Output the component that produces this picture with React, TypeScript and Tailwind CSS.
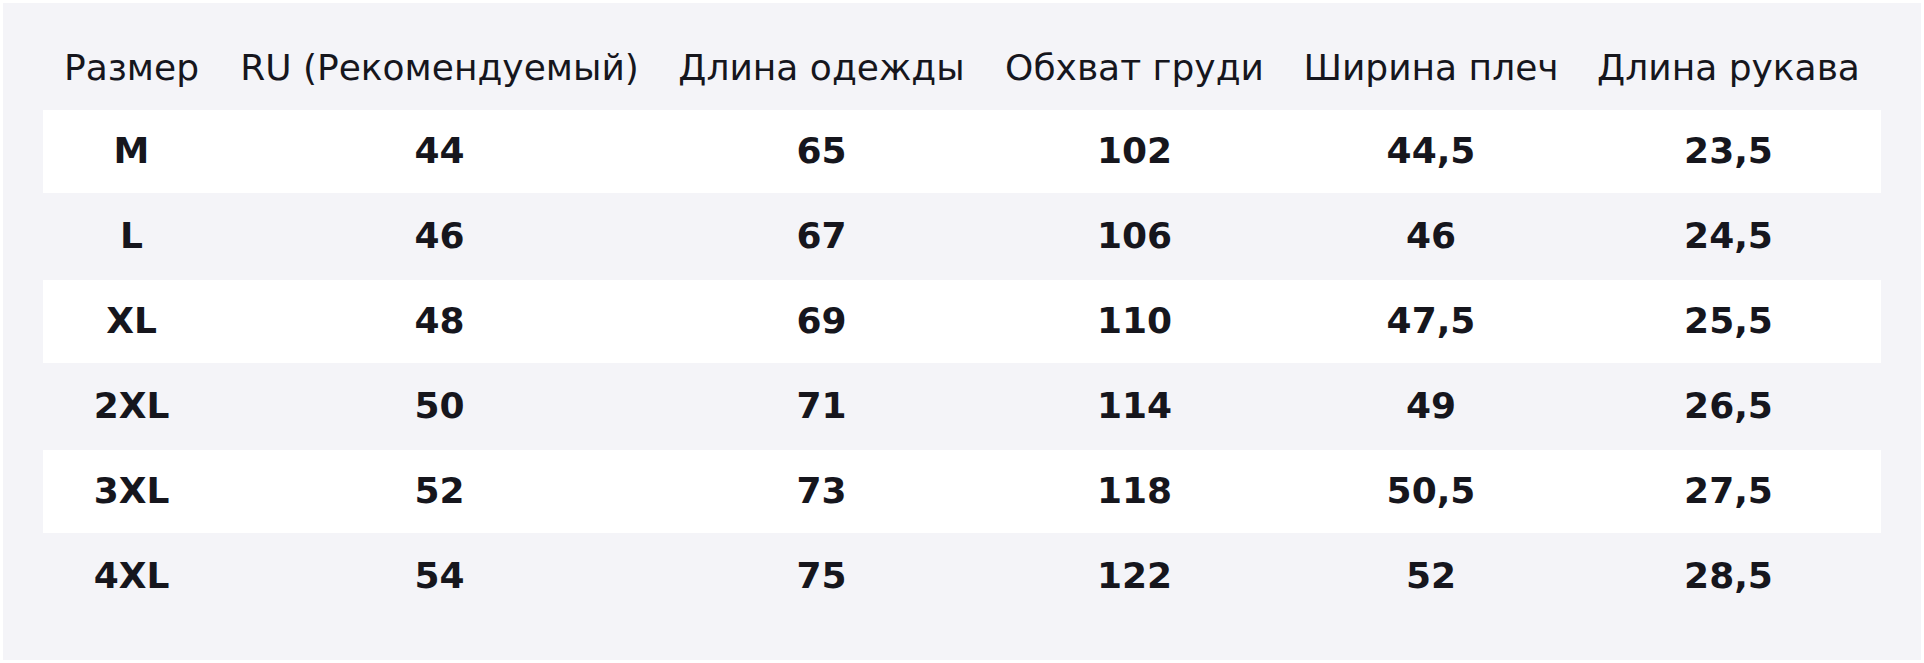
const headers = [
  "Размер",
  "RU (Рекомендуемый)",
  "Длина одежды",
  "Обхват груди",
  "Ширина плеч",
  "Длина рукава",
]

const rows = [
  ["M", "44", "65", "102", "44,5", "23,5"],
  ["L", "46", "67", "106", "46", "24,5"],
  ["XL", "48", "69", "110", "47,5", "25,5"],
  ["2XL", "50", "71", "114", "49", "26,5"],
  ["3XL", "52", "73", "118", "50,5", "27,5"],
  ["4XL", "54", "75", "122", "52", "28,5"],
]

const cols = "grid grid-cols-[177px_439px_325px_301px_292px_303px]"

export default function App() {
  return (
    <div className="min-h-screen bg-white p-[3px]" style={{ fontFamily: '"DejaVu Sans", sans-serif' }}>
      <div className="h-[657px] w-[1918px] bg-[#f4f4f8] px-10 pb-10 pt-[22px] text-[#16161d]">
        <div className={`${cols} h-[85px] items-center text-[36px]`}>
          {headers.map((h) => (
            <div key={h} className="text-center whitespace-nowrap">
              {h}
            </div>
          ))}
        </div>
        {rows.map((row, i) => (
          <div
            key={row[0]}
            className={`${cols} h-[85px] items-center border-b-2 border-[#f4f4f8] pb-px text-[36px] font-bold ${
              i % 2 === 0 ? "bg-white" : "bg-transparent"
            }`}
          >
            {row.map((cell, j) => (
              <div key={j} className="text-center">
                {cell}
              </div>
            ))}
          </div>
        ))}
      </div>
    </div>
  )
}
